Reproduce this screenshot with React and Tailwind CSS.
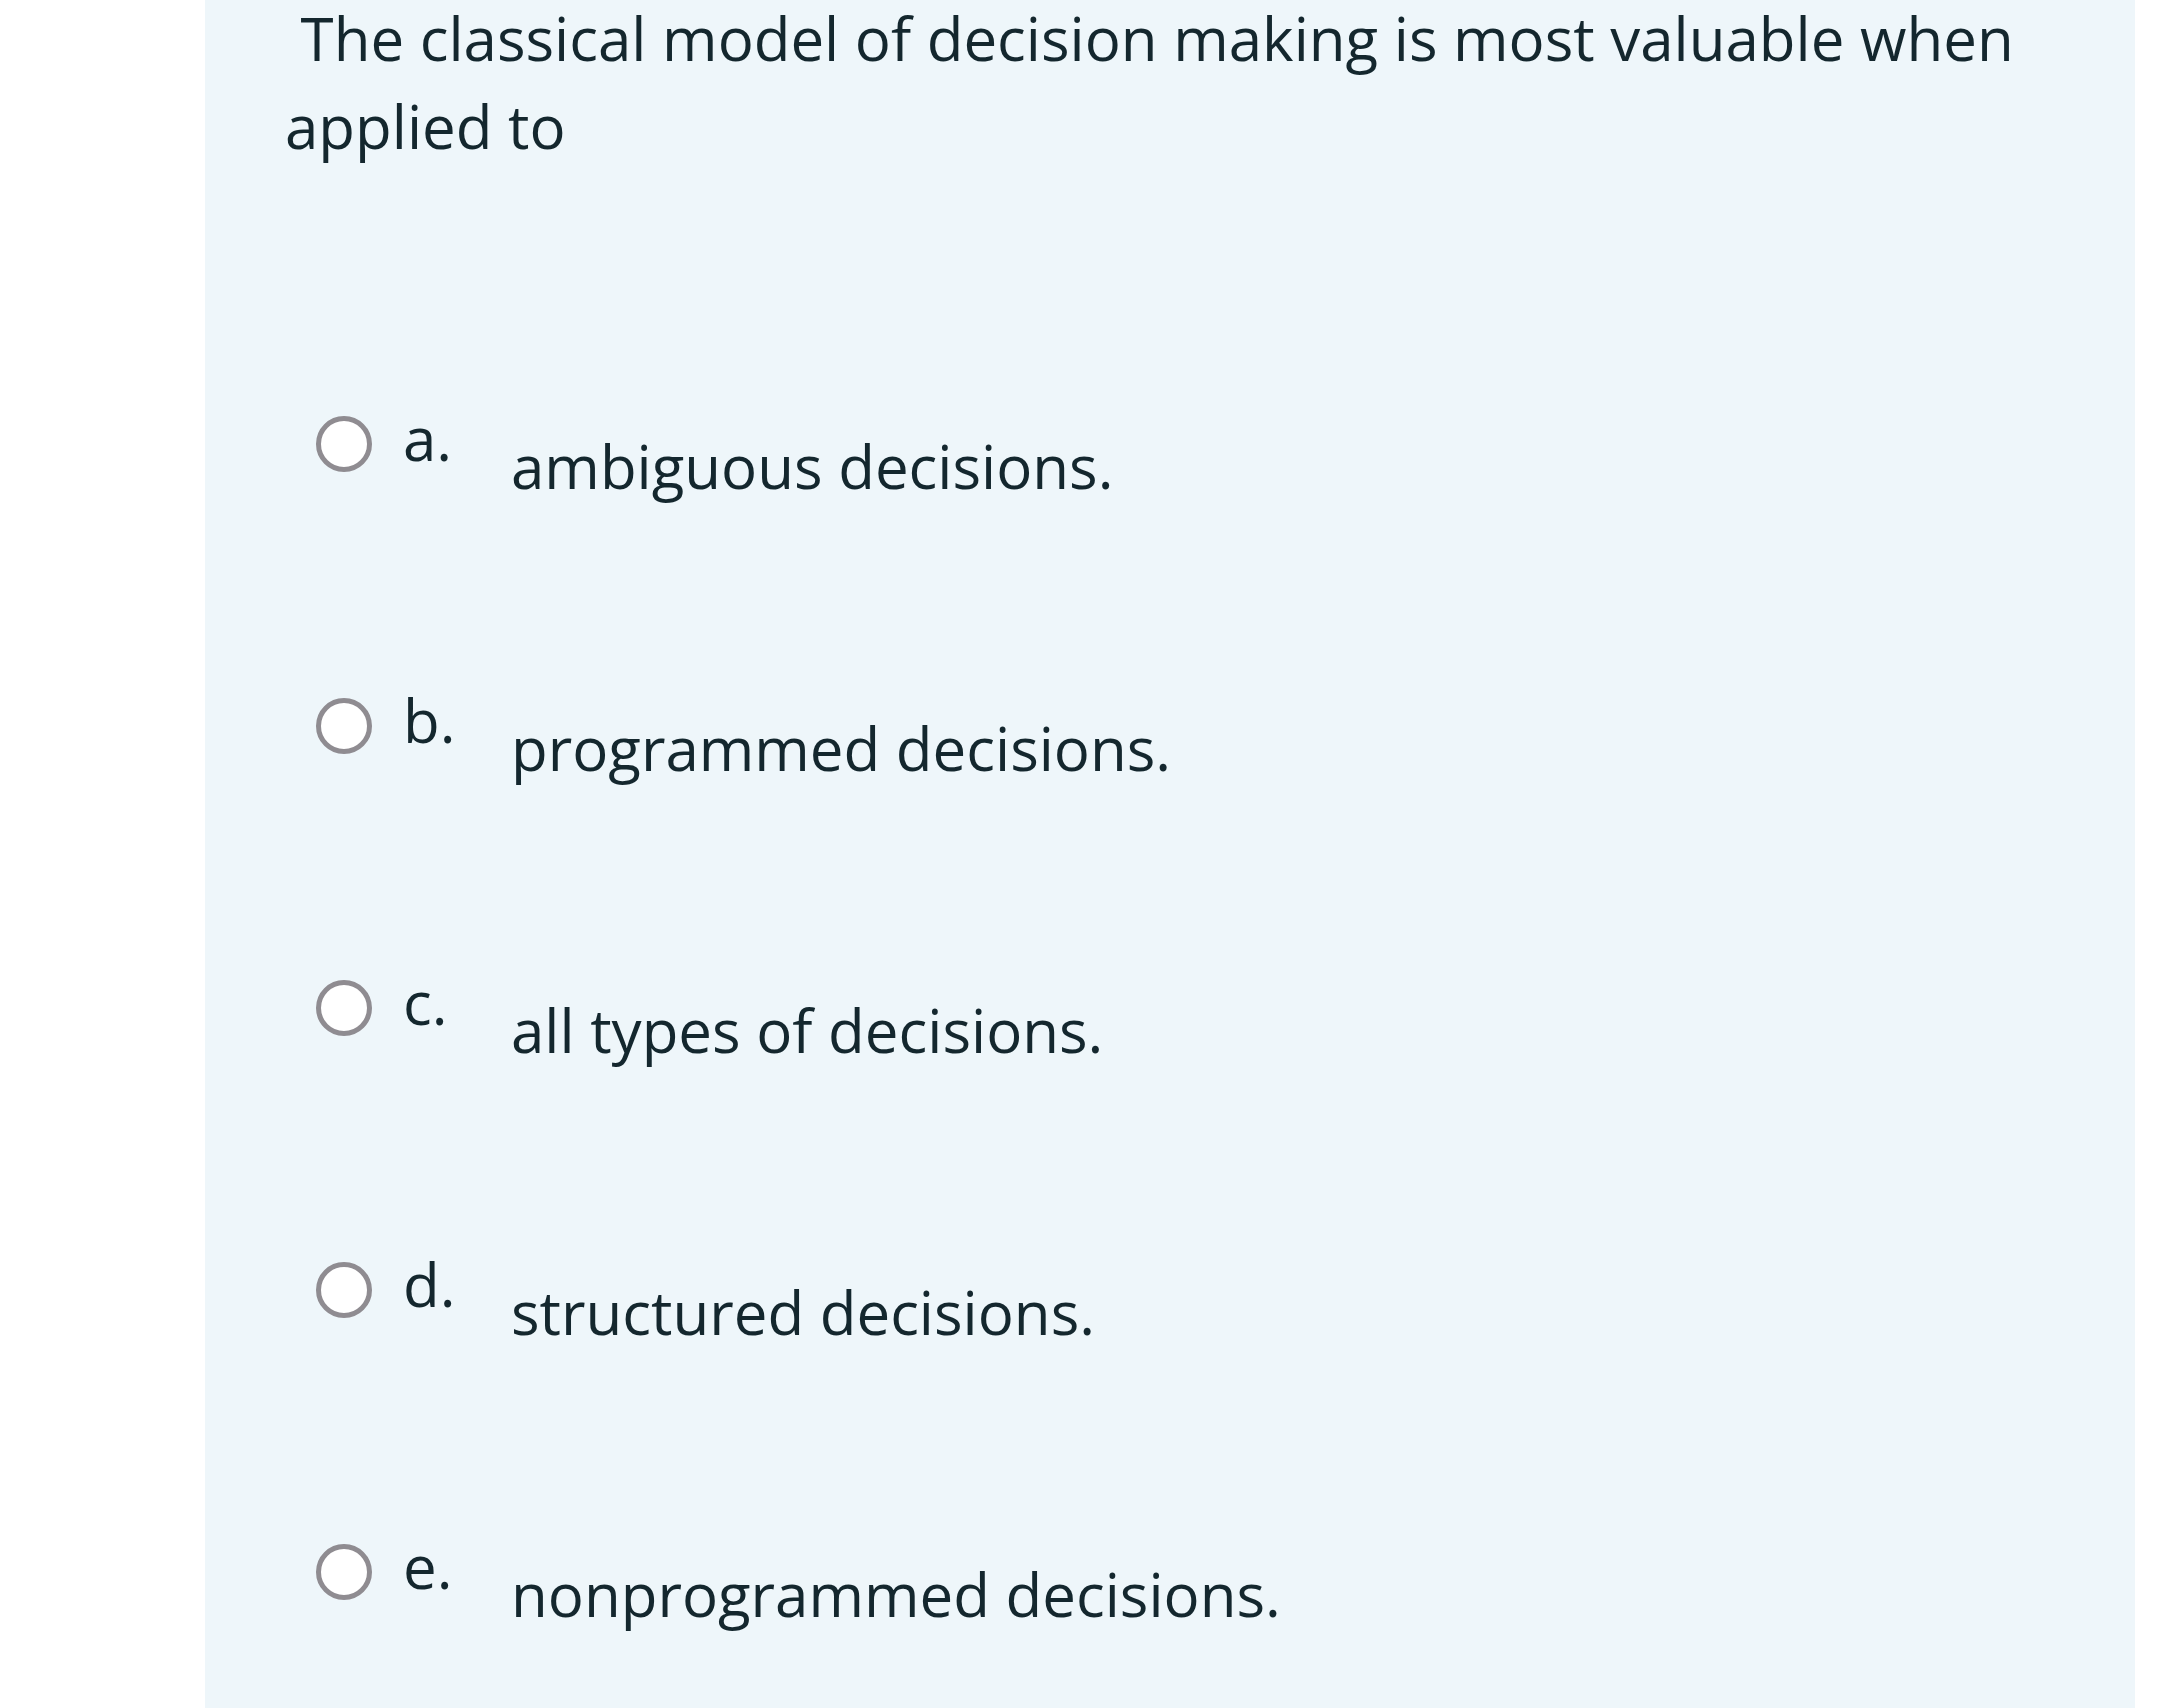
const options = [
  { letter: "a.", text: "ambiguous decisions." },
  { letter: "b.", text: "programmed decisions." },
  { letter: "c.", text: "all types of decisions." },
  { letter: "d.", text: "structured decisions." },
  { letter: "e.", text: "nonprogrammed decisions." },
];

export default function App() {
  return (
    <div
      className="min-h-screen bg-white flex overflow-hidden"
      style={{ fontFamily: '"Open Sans", "Noto Sans", sans-serif' }}
    >
      <div className="ml-[205px] w-[1930px] min-h-screen bg-[#eef6fa] text-[#14272e] text-[60px] pl-[80px]">
        {/* question */}
        <div className="-mt-[6px] pr-[40px] leading-[88px]">
          &nbsp;The classical model of decision making is most valuable when applied to
        </div>

        {/* answers */}
        <div className="mt-[225px] flex flex-col gap-[168px] leading-[86px]">
          {options.map((opt) => (
            <div key={opt.letter} className="flex items-start">
              <span className="ml-[31px] mt-[21px] w-[56px] h-[56px] rounded-full border-[5px] border-[#8f8c91] bg-white shrink-0" />
              <span className="ml-[31px] w-[108px] shrink-0">{opt.letter}</span>
              <span className="mt-[28px]">{opt.text}</span>
            </div>
          ))}
        </div>
      </div>
    </div>
  );
}
